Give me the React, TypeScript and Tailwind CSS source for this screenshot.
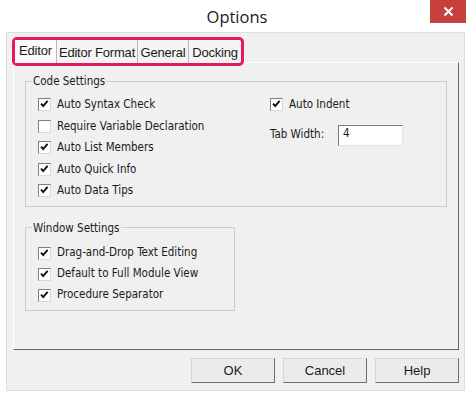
import React from "react";

function Box({ checked }: { checked: boolean }) {
  return (
    <span className="w-[13px] h-[13px] shrink-0 bg-white border border-t-[#7f7f7f] border-l-[#7f7f7f] border-r-[#d8d8d8] border-b-[#d8d8d8] flex items-start justify-start">
      {checked && (
        <svg width="11" height="11" viewBox="0 0 11 11" className="block">
          <path d="M2 4.6 L4.2 7 L8.6 1.8" stroke="#111" strokeWidth="1.9" fill="none" />
        </svg>
      )}
    </span>
  );
}

function Check({ label, checked = true, h = "h-[21.5px]" }: { label: string; checked?: boolean; h?: string }) {
  return (
    <div className={`flex items-center gap-[6px] ${h}`}>
      <Box checked={checked} />
      <span className="leading-none">{label}</span>
    </div>
  );
}

const arial = "font-['Liberation_Sans',sans-serif]";

export default function App() {
  return (
    <div className="w-[474px] h-[399px] bg-white relative overflow-hidden text-[#1a1a1a]">
      {/* Title bar */}
      <div className="h-[32px] flex items-center justify-center">
        <span className="font-['Open_Sans',sans-serif] text-[16.5px] text-[#222] mt-[2px]">Options</span>
      </div>
      <div className="absolute top-0 right-[8px] w-[36px] h-[23px] bg-[#c8403e] flex items-center justify-center">
        <svg width="11" height="11" viewBox="0 0 11 11">
          <path d="M1.5 1.5 L9.5 9.5 M9.5 1.5 L1.5 9.5" stroke="#fff" strokeWidth="2" />
        </svg>
      </div>

      {/* Dialog body */}
      <div className="ml-[6px] w-[459px] h-[359px] bg-[#f0f0f0] border border-[#dedede] pl-[6px] pr-[5px] pt-[4px] flex flex-col">
        {/* Tabs with highlight */}
        <div className={`relative z-10 -ml-[1px] w-[232px] h-[29px] border-[3px] border-[#e5195d] rounded-[5px] flex bg-[#f4f4f4] text-[13px] ${arial} whitespace-nowrap tracking-[-0.2px]`}>
          <div className="w-[41px] h-full bg-[#fbfbfb] flex items-center justify-center leading-none pb-[3px]">Editor</div>
          <div className="w-px h-full bg-[#b8b8b8]" />
          <div className="w-[80px] h-full flex items-center justify-center leading-none pt-[1px]">Editor Format</div>
          <div className="w-px h-full bg-[#b8b8b8]" />
          <div className="w-[50px] h-full flex items-center justify-center leading-none pt-[1px]">General</div>
          <div className="w-px h-full bg-[#b8b8b8]" />
          <div className="flex-1 h-full flex items-center justify-center leading-none pt-[1px]">Docking</div>
        </div>

        {/* Tab panel */}
        <div className="-mt-[4px] h-[288px] border border-t-white border-l-white border-r-[#666] border-b-[#666] px-[11px] font-['DejaVu_Sans_Condensed','Liberation_Sans',sans-serif] text-[11.5px]">
          <fieldset className="mt-[10px] border border-[#cdcdcd] pb-[4px]">
            <legend className="ml-[6px] px-[1px] leading-[16px]">Code Settings</legend>
            <div className="flex pl-[12px] pt-[5px]">
              <div className="w-[232px] flex flex-col">
                <Check label="Auto Syntax Check" />
                <Check label="Require Variable Declaration" checked={false} />
                <Check label="Auto List Members" />
                <Check label="Auto Quick Info" />
                <Check label="Auto Data Tips" />
              </div>
              <div className="flex flex-col">
                <Check label="Auto Indent" />
                <div className="mt-[9px] h-[21px] flex items-center">
                  <span className="w-[68px]">Tab Width:</span>
                  <div className="w-[65px] h-[21px] bg-white border border-t-[#7a7a7a] border-l-[#7a7a7a] border-r-[#e2e2e2] border-b-[#e2e2e2] flex items-center pl-[4px] pb-[2px]">
                    4
                  </div>
                </div>
              </div>
            </div>
          </fieldset>

          <fieldset className="mt-[13px] w-[210px] border border-[#cdcdcd] pb-[4px]">
            <legend className="ml-[6px] px-[1px] leading-[16px]">Window Settings</legend>
            <div className="flex flex-col pl-[12px] pt-[7px]">
              <Check label="Drag-and-Drop Text Editing" h="h-[21px]" />
              <Check label="Default to Full Module View" h="h-[21px]" />
              <Check label="Procedure Separator" h="h-[21px]" />
            </div>
          </fieldset>
        </div>

        {/* Buttons */}
        <div className="mt-[8px] flex justify-end gap-[8px]">
          {["OK", "Cancel", "Help"].map((b) => (
            <button
              key={b}
              className={`w-[84px] h-[25px] bg-[#ebebeb] border border-t-[#d6d6d6] border-l-[#d6d6d6] border-r-[#6e6e6e] border-b-[#6e6e6e] text-[13px] ${arial} leading-none text-[#1a1a1a]`}
            >
              {b}
            </button>
          ))}
        </div>
      </div>
    </div>
  );
}
